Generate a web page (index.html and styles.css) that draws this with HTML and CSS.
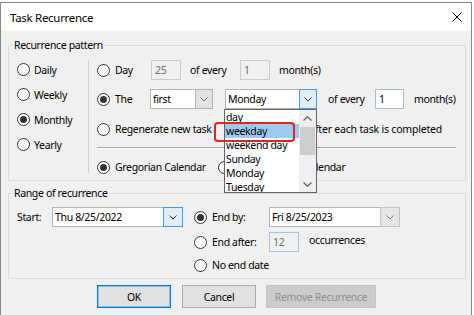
FILE: index.html
```html
<!DOCTYPE html>
<html lang="en">
<head>
    <meta charset="UTF-8">
    <title>Task Recurrence</title>
    <link rel="stylesheet" href="styles.css">
</head>
<body>

<div class="window">
    <div class="titlebar">
        <span class="title">Task Recurrence</span>
        <svg class="close" width="10" height="10" viewBox="0 0 10 10">
            <path d="M0.5 0.5L9.5 9.5M9.5 0.5L0.5 9.5" stroke="#000" stroke-width="1"/>
        </svg>
    </div>

    <div class="dialog-body">
        <fieldset class="group">
            <legend>Recurrence pattern</legend>
            <div class="pattern-inner">
                <div class="freq">
                    <div class="opt"><span class="radio"></span>Daily</div>
                    <div class="opt"><span class="radio"></span>Weekly</div>
                    <div class="opt"><span class="radio on"></span>Monthly</div>
                    <div class="opt"><span class="radio"></span>Yearly</div>
                </div>
                <div class="vsep"></div>
                <div class="options">
                    <div class="row">
                        <div class="lbl w54"><span class="radio"></span>Day</div>
                        <div class="field disabled w30">25</div>
                        <div class="txt every1">of every</div>
                        <div class="field disabled w30">1</div>
                        <div class="txt ml9">month(s)</div>
                    </div>
                    <div class="row r2">
                        <div class="lbl w53"><span class="radio on"></span>The</div>
                        <div class="combo w63">
                            <div class="val">first</div>
                            <div class="btn">
                                <svg width="8" height="5" viewBox="0 0 8 5"><path d="M0.5 0.5L4 4L7.5 0.5" fill="none" stroke="#666" stroke-width="1"/></svg>
                            </div>
                        </div>
                        <div class="combo w92 ml12 open">
                            <div class="val">Monday</div>
                            <div class="btn hot">
                                <svg width="8" height="5" viewBox="0 0 8 5"><path d="M0.5 0.5L4 4L7.5 0.5" fill="none" stroke="#333" stroke-width="1"/></svg>
                            </div>
                            <div class="list">
                                <div class="items">
                                    <div class="item">day</div>
                                    <div class="item sel">weekday</div>
                                    <div class="item">weekend day</div>
                                    <div class="item">Sunday</div>
                                    <div class="item">Monday</div>
                                    <div class="item">Tuesday</div>
                                </div>
                                <div class="scrollbar">
                                    <div class="arrow">
                                        <svg width="9" height="5" viewBox="0 0 9 5"><path d="M0.5 4.5L4.5 0.7L8.5 4.5" fill="none" stroke="#606060" stroke-width="1.2"/></svg>
                                    </div>
                                    <div class="thumb"></div>
                                    <div class="track"></div>
                                    <div class="arrow">
                                        <svg width="9" height="5" viewBox="0 0 9 5"><path d="M0.5 0.5L4.5 4.3L8.5 0.5" fill="none" stroke="#606060" stroke-width="1.2"/></svg>
                                    </div>
                                </div>
                                <div class="mark"></div>
                            </div>
                        </div>
                        <div class="txt every2">of every</div>
                        <div class="field active w29">1</div>
                        <div class="txt ml10">month(s)</div>
                    </div>
                    <div class="row r3">
                        <div class="lbl"><span class="radio"></span>Regenerate new task</div>
                        <div class="txt tail">after each task is completed</div>
                    </div>
                    <div class="hsep"></div>
                    <div class="row r4">
                        <div class="lbl w121"><span class="radio on"></span>Gregorian Calendar</div>
                        <div class="lbl"><span class="radio"></span>Hebrew Lunar Calendar</div>
                    </div>
                </div>
            </div>
        </fieldset>

        <fieldset class="group range">
            <legend>Range of recurrence</legend>
            <div class="range-inner">
                <div class="start">
                    <div class="txt w35">Start:</div>
                    <div class="combo date">
                        <div class="val">Thu 8/25/2022</div>
                        <div class="btn hot wide">
                            <svg width="8" height="5" viewBox="0 0 8 5"><path d="M0.5 0.5L4 4L7.5 0.5" fill="none" stroke="#333" stroke-width="1"/></svg>
                        </div>
                    </div>
                </div>
                <div class="ends">
                    <div class="row">
                        <div class="lbl w75"><span class="radio on"></span>End by:</div>
                        <div class="combo date">
                            <div class="val">Fri 8/25/2023</div>
                            <div class="btn wide sep">
                                <svg width="8" height="5" viewBox="0 0 8 5"><path d="M0.5 0.5L4 4L7.5 0.5" fill="none" stroke="#777" stroke-width="1"/></svg>
                            </div>
                        </div>
                    </div>
                    <div class="row e2">
                        <div class="lbl w75"><span class="radio"></span>End after:</div>
                        <div class="field disabled bluish w30">12</div>
                        <div class="txt ml10 up2">occurrences</div>
                    </div>
                    <div class="row e3">
                        <div class="lbl"><span class="radio"></span>No end date</div>
                    </div>
                </div>
            </div>
        </fieldset>

        <div class="buttons">
            <button class="default">OK</button>
            <button class="cancel">Cancel</button>
            <button class="remove" disabled>Remove Recurrence</button>
        </div>
    </div>
</div>

</body>
</html>
```
FILE: styles.css
```css
body {
    margin: 0;
    background-color: #fff;
    font-family: "Noto Sans", "DejaVu Sans", sans-serif;
    font-size: 10.5px;
    letter-spacing: -0.35px;
    color: #000;
    overflow: hidden;
}

.window {
    margin-top: 2px;
    width: 470px;
    height: 313px;
    border: 1px solid #8a8a8a;
    border-bottom: none;
    display: flex;
    flex-direction: column;
    overflow: hidden;
}

.titlebar {
    height: 28px;
    flex: none;
    background-color: #fff;
    display: flex;
    align-items: center;
    justify-content: space-between;
    padding: 0 9px;
}

.title {
    font-size: 11.5px;
    letter-spacing: -0.3px;
}

.dialog-body {
    flex: 1;
    background-color: #f0f0f0;
    padding: 8px 5px 0 7px;
}

/* group boxes */
.group {
    margin: 0;
    padding: 5px 0 3px 0;
    border: 1px solid #dcdcdc;
    min-width: 0;
}

.group legend {
    margin-left: 4px;
    padding: 0 1px;
    line-height: 13px;
}

.range {
    margin-top: 6px;
    padding-top: 7px;
}

.pattern-inner {
    display: flex;
    align-items: flex-start;
}

.freq {
    width: 71px;
    padding-left: 8px;
    display: flex;
    flex-direction: column;
}

.freq .opt {
    height: 25px;
    display: flex;
    align-items: center;
}

.freq .radio {
    margin-right: 4px;
}

.vsep {
    width: 1px;
    height: 113px;
    margin-top: 3px;
    background-color: #cfcfcf;
}

.options {
    flex: 1;
    padding: 3px 9px 0 8px;
}

.row {
    height: 20px;
    display: flex;
    align-items: center;
}

.r2 { margin-top: 9px; }
.r3 { margin-top: 10px; }
.r4 { margin-top: 8px; }

.hsep {
    margin-top: 8px;
    border-top: 1px solid #a9a9a9;
    border-bottom: 1px solid #fff;
}

.lbl {
    display: flex;
    align-items: center;
    flex: none;
    white-space: nowrap;
}

.radio {
    width: 13px;
    height: 13px;
    box-sizing: border-box;
    border: 1px solid #333;
    border-radius: 50%;
    background-color: #fff;
    margin-right: 5px;
    position: relative;
    flex: none;
}

.radio.on::after {
    content: "";
    position: absolute;
    inset: 2px;
    border-radius: 50%;
    background-color: #333;
}

.w29 { width: 29px; }
.w30 { width: 30px; }
.w35 { width: 35px; }
.w53 { width: 53px; }
.w54 { width: 54px; }
.w63 { width: 63px; }
.w75 { width: 75px; }
.w92 { width: 92px; }
.w121 { width: 121px; }
.ml9 { margin-left: 9px; }
.ml10 { margin-left: 10px; }
.ml12 { margin-left: 12px; }

.txt {
    white-space: nowrap;
    flex: none;
}

.every1 {
    margin-left: 9px;
    width: 50px;
}

.every2 {
    margin-left: 11px;
    width: 47px;
}

.tail {
    margin-left: auto;
    margin-right: 14px;
    letter-spacing: -0.2px;
}

.up2 {
    margin-top: -4px;
}

/* text fields */
.field {
    height: 20px;
    box-sizing: border-box;
    border: 1px solid #7a7a7a;
    background-color: #fff;
    padding-left: 3px;
    line-height: 18px;
    flex: none;
}

.field.disabled {
    border-color: #cccccc;
    background-color: #f0f0f0;
    color: #6d6d6d;
}

.field.active {
    border-color: #a3bddb;
}

.field.bluish {
    border-color: #a6c3e3;
}

/* combo boxes */
.combo {
    height: 20px;
    box-sizing: border-box;
    border: 1px solid #b4b4b4;
    background-color: #fff;
    display: flex;
    flex: none;
    position: relative;
}

.combo .val {
    flex: 1;
    padding-left: 2px;
    line-height: 18px;
    white-space: nowrap;
}

.combo .btn {
    width: 16px;
    border-left: 1px solid #b4b4b4;
    background-color: #e3e3e3;
    display: flex;
    align-items: center;
    justify-content: center;
}

.combo .btn.wide {
    width: 18px;
}

.combo .btn.hot {
    margin: -1px -1px -1px 0;
    border: 1px solid #4a9ae0;
    background-color: #e1eefa;
}

.combo.date {
    width: 131px;
}

.combo .btn.sep {
    margin: -1px -1px -1px 1px;
    border: 1px solid #c4c4c4;
    background-color: #e6e6e6;
}

/* open dropdown list */
.list {
    position: absolute;
    left: -2px;
    top: 19px;
    width: 93px;
    height: 84px;
    box-sizing: border-box;
    border: 1px solid #646464;
    background-color: #fff;
    display: flex;
    z-index: 5;
}

.items {
    flex: 1;
    overflow: hidden;
}

.item {
    height: 14px;
    line-height: 14px;
    padding-left: 1px;
    white-space: nowrap;
}

.item.sel {
    background-color: #9ccaf0;
}

.scrollbar {
    width: 17px;
    background-color: #f0f0f0;
    display: flex;
    flex-direction: column;
}

.scrollbar .arrow {
    height: 16px;
    display: flex;
    align-items: center;
    justify-content: center;
}

.scrollbar .thumb {
    height: 28px;
    margin: 1px 1px 0 1px;
    background-color: #cdcdcd;
}

.scrollbar .track {
    flex: 1;
}

.mark {
    position: absolute;
    left: -11px;
    top: 12px;
    width: 81px;
    height: 20px;
    box-sizing: border-box;
    border: 2px solid #e3241f;
    border-radius: 4px;
}

/* range of recurrence */
.range-inner {
    display: flex;
    align-items: flex-start;
    padding-left: 8px;
}

.start {
    display: flex;
    align-items: center;
    height: 20px;
}

.ends {
    margin-left: 11px;
}

.e2 { margin-top: 5px; }
.e3 { margin-top: 3px; }

/* buttons */
.buttons {
    display: flex;
    gap: 11px;
    margin-top: 6px;
    padding-left: 89px;
}

button {
    height: 23px;
    width: 74px;
    font-family: inherit;
    font-size: inherit;
    letter-spacing: inherit;
    color: #000;
    background-color: #e1e1e1;
    border: 1px solid #adadad;
    padding: 0;
}

button.default {
    border-color: #0078d7;
    box-shadow: inset 0 0 0 1px #8cc0ea;
}

button.remove {
    width: 110px;
    margin-left: -1px;
    background-color: #cccccc;
    border-color: #c4c4c4;
    color: #8f8f8f;
}
```
